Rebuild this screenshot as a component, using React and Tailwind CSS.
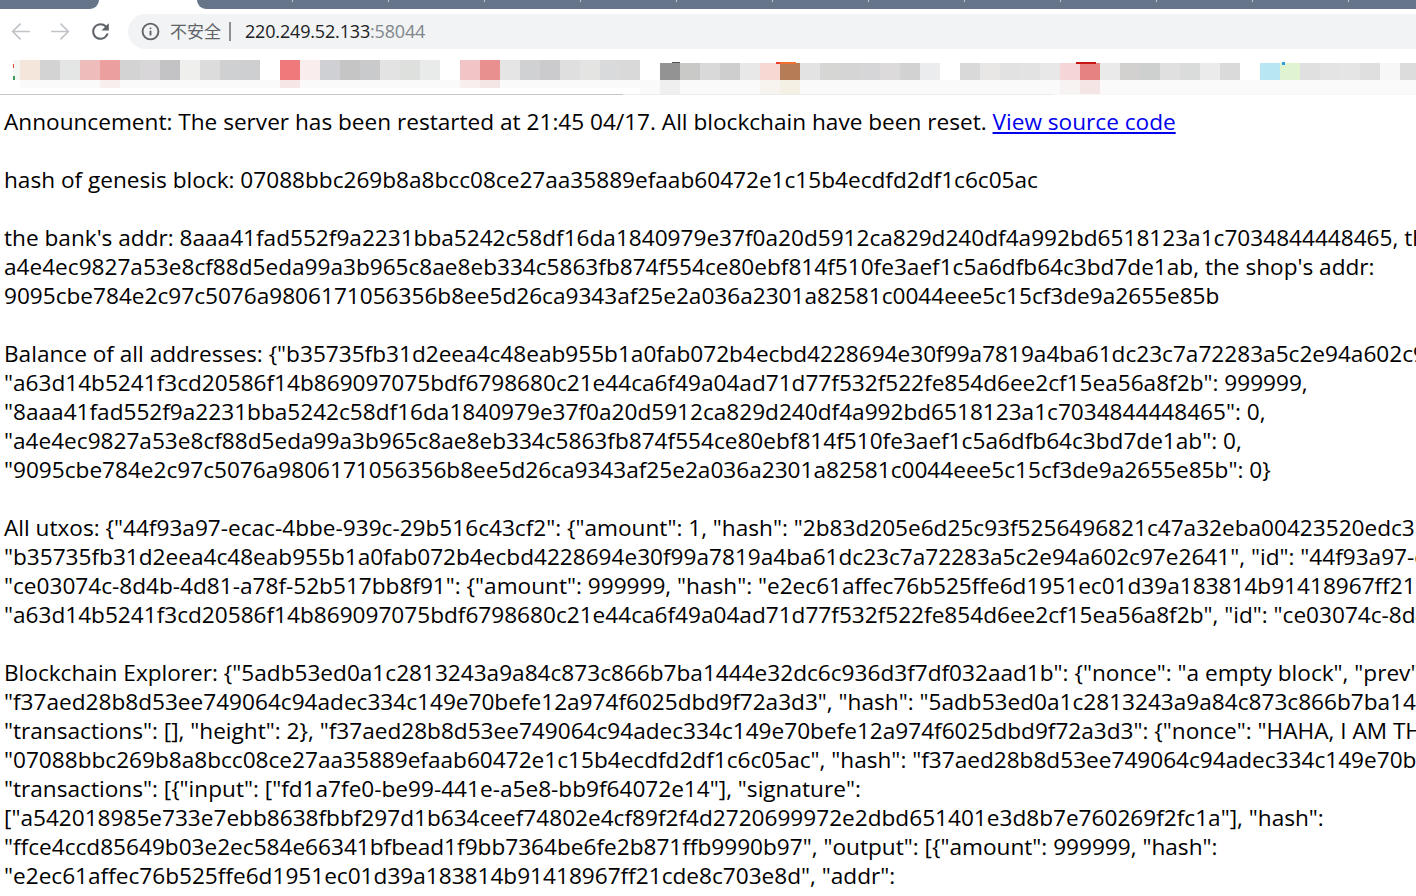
import React from "react";
import { Info } from "lucide-react";

const TOP_CELLS = [
  "bg-[#f5e6dc]", "bg-[#d3d3d3]", "bg-[#e3e6e4]", "bg-[#efbcbc]", "bg-[#ec9f9f]", "bg-[#d4d3d4]", "bg-[#d9d6da]", "bg-[#c3c3c5]",
  "bg-[#efefee]", "bg-[#dcdcdc]", "bg-[#cfd0d1]", "bg-[#cdcfd1]", "bg-white", "bg-[#f07a7b]", "bg-[#f9eeed]", "bg-[#ced0d3]",
  "bg-[#c5c5c6]", "bg-[#c9cacb]", "bg-[#e3e3e3]", "bg-[#dee0de]", "bg-[#e9eaea]", "bg-white", "bg-[#f3c4c6]", "bg-[#e89090]",
  "bg-[#e5e5e5]", "bg-[#d0d1d3]", "bg-[#cbcbcd]", "bg-[#dfdfdf]", "bg-[#e4e4e2]", "bg-[#d9dadc]", "bg-[#d9d9d9]", "bg-white",
  "bg-[#939393]", "bg-[#c9c9c8]", "bg-[#d9d9d9]", "bg-[#cecece]", "bg-[#e8e8e8]", "bg-[#f8d8d2]", "bg-[#b47d56]", "bg-[#e3e3e3]",
  "bg-[#d6d6d5]", "bg-[#d5d5d5]", "bg-[#d6d6d8]", "bg-[#dcdadb]", "bg-[#d2d2d2]", "bg-[#ebecee]", "bg-white", "bg-[#d9d9d9]",
  "bg-[#e8e7e5]", "bg-[#e2e2e2]", "bg-[#e3e3e3]", "bg-[#e8e8e8]", "bg-[#f6d5d7]", "bg-[#e58383]", "bg-[#eaeaea]", "bg-[#d2d1cf]",
  "bg-[#ced0cf]", "bg-[#e0e0e0]", "bg-[#dadcdb]", "bg-[#ebebeb]", "bg-[#dadada]", "bg-white", "bg-[#b8e6f2]", "bg-[#e1f4d2]",
  "bg-[#e0e0e0]", "bg-[#e4e4e4]", "bg-[#e5e5e5]", "bg-[#dfdfdf]", "bg-[#f7f7f7]", "bg-[#dcdcdc]",
];

const LOW_CELLS = {
  4: "bg-[#f9eeee]", 13: "bg-[#f7e6e6]", 22: "bg-[#f9eeee]", 23: "bg-[#f5e6e6]", 32: "bg-[#efefef]",
  37: "bg-[#f7f4f0]", 38: "bg-[#f4f0e4]", 52: "bg-[#f7f3f2]", 53: "bg-[#f5e5e5]",
};

// tiny bits of favicon poking out above the mosaic
const ACCENTS = {
  32: "left-[12px] w-[8px] h-[1px] bg-[#555555]",
  37: "left-[16px] w-[4px] h-[2px] bg-[#f03a2e]",
  38: "left-0 w-[16px] h-[2px] bg-[#f07030]",
  52: "left-[16px] w-[4px] h-[2px] bg-[#c81414]",
  53: "left-0 w-[16px] h-[2px] bg-[#c81414]",
  63: "left-[2px] w-[3px] h-[3px] bg-[#2a9fdc]",
};

const BLOCKS = [
  [
    <>
      Announcement: The server has been restarted at 21:45 04/17. All blockchain have been reset.{" "}
      <a href="#" className="text-[#0000ee] underline">View source code</a>
    </>,
  ],
  ["hash of genesis block: 07088bbc269b8a8bcc08ce27aa35889efaab60472e1c15b4ecdfd2df1c6c05ac"],
  [
    "the bank's addr: 8aaa41fad552f9a2231bba5242c58df16da1840979e37f0a20d5912ca829d240df4a992bd6518123a1c7034844448465, the",
    "a4e4ec9827a53e8cf88d5eda99a3b965c8ae8eb334c5863fb874f554ce80ebf814f510fe3aef1c5a6dfb64c3bd7de1ab, the shop's addr:",
    "9095cbe784e2c97c5076a9806171056356b8ee5d26ca9343af25e2a036a2301a82581c0044eee5c15cf3de9a2655e85b",
  ],
  [
    "Balance of all addresses: {\"b35735fb31d2eea4c48eab955b1a0fab072b4ecbd4228694e30f99a7819a4ba61dc23c7a72283a5c2e94a602c97e2641\": 1,",
    "\"a63d14b5241f3cd20586f14b869097075bdf6798680c21e44ca6f49a04ad71d77f532f522fe854d6ee2cf15ea56a8f2b\": 999999,",
    "\"8aaa41fad552f9a2231bba5242c58df16da1840979e37f0a20d5912ca829d240df4a992bd6518123a1c7034844448465\": 0,",
    "\"a4e4ec9827a53e8cf88d5eda99a3b965c8ae8eb334c5863fb874f554ce80ebf814f510fe3aef1c5a6dfb64c3bd7de1ab\": 0,",
    "\"9095cbe784e2c97c5076a9806171056356b8ee5d26ca9343af25e2a036a2301a82581c0044eee5c15cf3de9a2655e85b\": 0}",
  ],
  [
    "All utxos: {\"44f93a97-ecac-4bbe-939c-29b516c43cf2\": {\"amount\": 1, \"hash\": \"2b83d205e6d25c93f5256496821c47a32eba00423520edc3\", \"addr\":",
    "\"b35735fb31d2eea4c48eab955b1a0fab072b4ecbd4228694e30f99a7819a4ba61dc23c7a72283a5c2e94a602c97e2641\", \"id\": \"44f93a97-ecac\"},",
    "\"ce03074c-8d4b-4d81-a78f-52b517bb8f91\": {\"amount\": 999999, \"hash\": \"e2ec61affec76b525ffe6d1951ec01d39a183814b91418967ff21cde\",",
    "\"a63d14b5241f3cd20586f14b869097075bdf6798680c21e44ca6f49a04ad71d77f532f522fe854d6ee2cf15ea56a8f2b\", \"id\": \"ce03074c-8d4b\"}}",
  ],
  [
    "Blockchain Explorer: {\"5adb53ed0a1c2813243a9a84c873c866b7ba1444e32dc6c936d3f7df032aad1b\": {\"nonce\": \"a empty block\", \"prev\":",
    "\"f37aed28b8d53ee749064c94adec334c149e70befe12a974f6025dbd9f72a3d3\", \"hash\": \"5adb53ed0a1c2813243a9a84c873c866b7ba1444e32dc\",",
    "\"transactions\": [], \"height\": 2}, \"f37aed28b8d53ee749064c94adec334c149e70befe12a974f6025dbd9f72a3d3\": {\"nonce\": \"HAHA, I AM THE BANK\",",
    "\"07088bbc269b8a8bcc08ce27aa35889efaab60472e1c15b4ecdfd2df1c6c05ac\", \"hash\": \"f37aed28b8d53ee749064c94adec334c149e70befe12a974\",",
    "\"transactions\": [{\"input\": [\"fd1a7fe0-be99-441e-a5e8-bb9f64072e14\"], \"signature\":",
    "[\"a542018985e733e7ebb8638fbbf297d1b634ceef74802e4cf89f2f4d2720699972e2dbd651401e3d8b7e760269f2fc1a\"], \"hash\":",
    "\"ffce4ccd85649b03e2ec584e66341bfbead1f9bb7364be6fe2b871ffb9990b97\", \"output\": [{\"amount\": 999999, \"hash\":",
    "\"e2ec61affec76b525ffe6d1951ec01d39a183814b91418967ff21cde8c703e8d\", \"addr\":",
    "\"a63d14b5241f3cd20586f14b869097075bdf6798680c21e44ca6f49a04ad71d77f532f522fe854d6ee2cf15ea56a8f2b\", \"id\":",
  ],
];

const RELOAD =
  "M17.65 6.35A7.958 7.958 0 0 0 12 4c-4.42 0-7.99 3.58-7.99 8s3.57 8 7.99 8c3.73 0 6.84-2.55 7.73-6h-2.08A5.99 5.99 0 0 1 12 18c-3.31 0-6-2.69-6-6s2.69-6 6-6c1.66 0 3.14.69 4.22 1.78L13 11h7V4l-2.35 2.35z";

function Arrow({ d }) {
  return (
    <svg viewBox="0 0 24 24" fill="none" stroke="currentColor" strokeWidth={1.6} className="h-[25px] w-[25px] shrink-0 text-[#c0c3c7]">
      <path d={d} />
    </svg>
  );
}

function TabStrip() {
  return (
    <div className="flex h-[9px] bg-white overflow-hidden">
      <div className="w-[99px] shrink-0 rounded-br-[9px] bg-[#667589]" />
      <div className="w-[98px] shrink-0" />
      <div className="flex flex-1 rounded-bl-[9px] bg-[#667589]">
        {Array.from({ length: 13 }).map((_, i) => (
          <div key={i} className="flex w-[96px] shrink-0 justify-end">
            <span className="h-[2px] w-px bg-[#c5ccd4]" />
          </div>
        ))}
      </div>
    </div>
  );
}

function Toolbar() {
  return (
    <div className="flex h-[45px] items-start pt-[5px]">
      <div className="flex h-[35px] w-[128px] shrink-0 items-center gap-[15px] pl-[8px]">
        <Arrow d="M21 12H4.5M12 4.5 4.5 12l7.5 7.5" />
        <Arrow d="M3 12h16.5M12 4.5l7.5 7.5-7.5 7.5" />
        <svg viewBox="0 0 24 24" className="h-[25px] w-[25px] shrink-0 fill-current text-[#5f6368]">
          <path d={RELOAD} />
        </svg>
      </div>
      <div className="flex h-[35px] flex-1 items-center rounded-l-full bg-[#f1f3f4] pl-[13px]">
        <Info size={19} className="text-[#5f6368]" strokeWidth={2.4} />
        <span className="ml-[10px] -mt-[2px] text-[17px] text-[#5f6368] font-['Noto_Sans_CJK_SC',sans-serif]">不安全</span>
        <span className="ml-[8px] h-[19px] w-[2px] bg-[#8a8d91]" />
        <span className="ml-[14px] text-[18px] text-[#202124] font-['Open_Sans',sans-serif] tracking-[-0.17px]">
          220.249.52.133<span className="text-[#80868b]">:58044</span>
        </span>
      </div>
    </div>
  );
}

function Bookmarks() {
  return (
    <>
      <div className="relative h-[40px] overflow-hidden pt-[6px] pl-[20px]">
        {/* favicon sliver left of the blur */}
        <div className="absolute left-[13px] top-[6px] h-[20px] w-[7px] bg-[#f4f6f4]">
          <span className="absolute left-0 top-[4px] h-[4px] w-px bg-[#d9503f]" />
          <span className="absolute left-0 bottom-0 h-[4px] w-[2px] bg-[#3a9a5a]" />
        </div>
        <div className="flex h-[20px] items-end">
          {TOP_CELLS.map((c, i) => (
            <div key={i} className={`relative w-[20px] shrink-0 ${i > 30 ? "h-[17px]" : "h-[20px]"} ${c}`}>
              {ACCENTS[i] && <span className={`absolute -top-[1px] ${ACCENTS[i]}`} />}
            </div>
          ))}
        </div>
        <div className="flex">
          {TOP_CELLS.map((_, i) => (
            <div key={i} className={`w-[20px] shrink-0 ${i > 30 ? "h-[14px]" : "h-[8px]"} ${LOW_CELLS[i] || "bg-[#fafafa]"}`} />
          ))}
        </div>
      </div>
      <div className="flex h-px">
        <div className="w-[623px] bg-[#c6c6c6]" />
        <div className="w-[430px] bg-[#ececec]" />
        <div className="flex-1 bg-[#f8f8f8]" />
      </div>
    </>
  );
}

export default function App() {
  return (
    <div className="h-[896px] w-[1416px] overflow-hidden bg-white">
      <TabStrip />
      <Toolbar />
      <Bookmarks />
      <main className="pl-[4px] pt-[12px] text-[22.62px] leading-[29px] text-black whitespace-nowrap font-['Open_Sans',sans-serif]">
        {BLOCKS.map((lines, i) => (
          <p key={i} className="mb-[29px]">
            {lines.map((line, j) => (
              <span key={j} className={`block ${i === 5 && j === 8 ? "-mt-[1px]" : ""}`}>{line}</span>
            ))}
          </p>
        ))}
      </main>
    </div>
  );
}
